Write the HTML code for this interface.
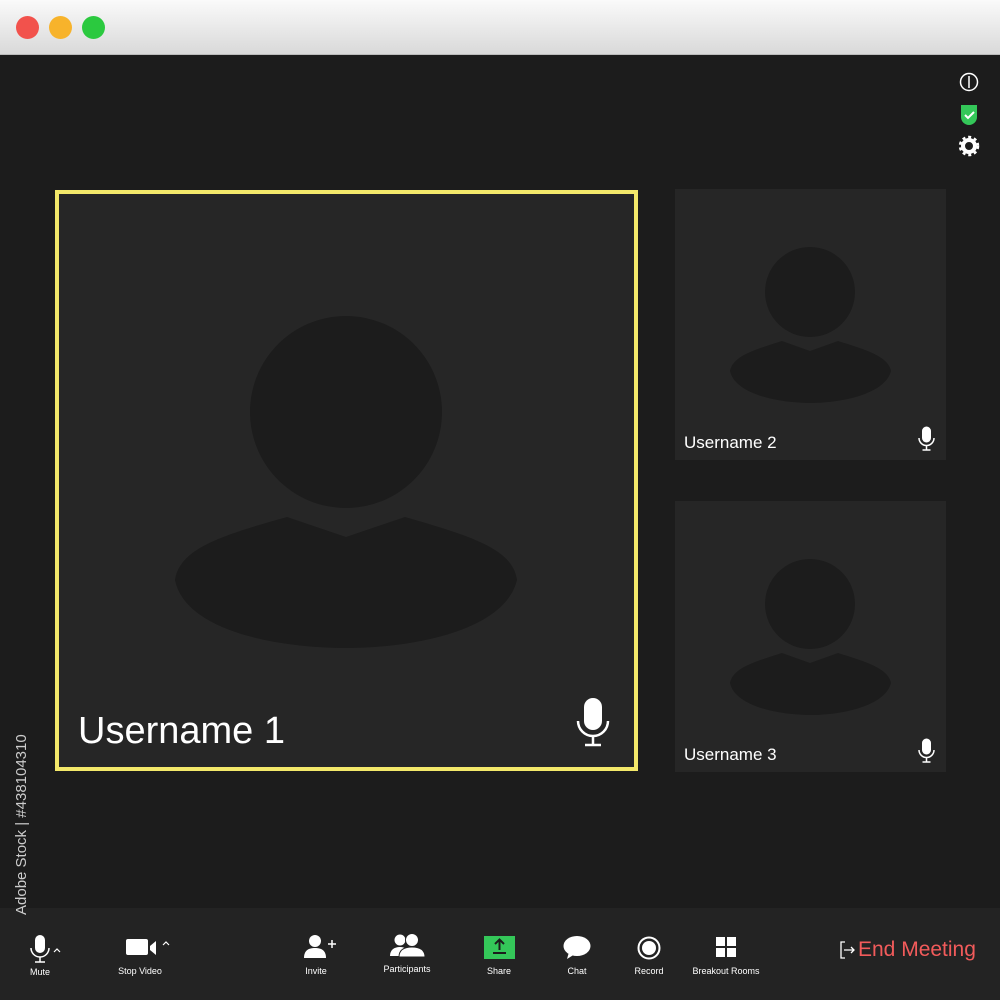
<!DOCTYPE html>
<html><head><style>
*{margin:0;padding:0;box-sizing:border-box}
body{width:1000px;height:1000px;background:#1c1c1c;position:relative;overflow:hidden;font-family:"Liberation Sans",sans-serif;color:#fff}
.title{position:absolute;left:0;top:0;width:1000px;height:55px;background:linear-gradient(#fafafa,#d9d9d9);border-bottom:1px solid #bbb}
.dot{position:absolute;top:16px;width:23px;height:23px;border-radius:50%}
.tile{position:absolute;background:#262626}
.lbl{position:absolute;color:#fff}
.tb{position:absolute;left:0;top:908px;width:1000px;height:92px;background:#232323}
.t{position:absolute;font-size:9px;color:#fff;text-align:center;width:90px}
</style></head><body>
<div class="title">
<div class="dot" style="left:16px;background:#f2524c"></div>
<div class="dot" style="left:49px;background:#f7b32b"></div>
<div class="dot" style="left:82px;background:#2bc93f"></div>
</div>
<svg style="position:absolute;left:958px;top:72px" width="22" height="90" viewBox="0 0 22 90">
<circle cx="11" cy="10" r="8.5" fill="none" stroke="#fff" stroke-width="1.5"/><line x1="11" y1="4" x2="11" y2="16" stroke="#fff" stroke-width="1.5"/>
<path d="M3 33h16v12a8 8 0 0 1-16 0z" fill="#34c759"/><path d="M7 43l3 3 6-6" stroke="#fff" stroke-width="2" fill="none"/>
<circle cx="11" cy="74" r="6" fill="none" stroke="#fff" stroke-width="4"/>
<circle cx="11" cy="74" r="9" fill="none" stroke="#fff" stroke-width="2.5" stroke-dasharray="3 2.9"/>
</svg>
<div class="tile" style="left:55px;top:190px;width:583px;height:581px;border:4px solid #f3e86a"></div>
<svg style="position:absolute;left:175px;top:315px" width="342" height="335" viewBox="0 0 342 335">
<circle cx="171" cy="97" r="96" fill="#1c1c1c"/>
<path d="M0 265 C5 235 40 222 112 202 L171 222 L230 202 C300 222 338 235 342 265 C330 315 240 333 171 333 C100 333 10 315 0 265z" fill="#1c1c1c"/>
</svg>
<div class="lbl" style="left:78px;top:710px;font-size:38px">Username 1</div>
<svg style="position:absolute;left:576px;top:697px" width="34" height="50" viewBox="0 0 34 50">
<rect x="8" y="1" width="18" height="32" rx="9" fill="#fff"/><path d="M2 24a15 15 0 0 0 30 0" stroke="#fff" stroke-width="2.5" fill="none"/><line x1="17" y1="39" x2="17" y2="48" stroke="#fff" stroke-width="2.5"/><line x1="9" y1="48" x2="25" y2="48" stroke="#fff" stroke-width="2.5"/>
</svg>
<div class="tile" style="left:675px;top:189px;width:271px;height:271px"></div>
<svg style="position:absolute;left:730px;top:246px" width="161" height="158" viewBox="0 0 161 158">
<circle cx="80" cy="46" r="45" fill="#1c1c1c"/><path d="M0 125C3 111 20 105 52 95L80 105L108 95C140 105 158 111 161 125C155 148 112 157 80 157C48 157 5 148 0 125z" fill="#1c1c1c"/>
</svg>
<div class="lbl" style="left:684px;top:433px;font-size:17px">Username 2</div>
<svg style="position:absolute;left:918px;top:426px" width="17" height="25" viewBox="0 0 34 50"><rect x="8" y="1" width="18" height="32" rx="9" fill="#fff"/><path d="M2 24a15 15 0 0 0 30 0" stroke="#fff" stroke-width="3" fill="none"/><line x1="17" y1="39" x2="17" y2="48" stroke="#fff" stroke-width="3"/><line x1="9" y1="48" x2="25" y2="48" stroke="#fff" stroke-width="3"/></svg>
<div class="tile" style="left:675px;top:501px;width:271px;height:271px"></div>
<svg style="position:absolute;left:730px;top:558px" width="161" height="158" viewBox="0 0 161 158">
<circle cx="80" cy="46" r="45" fill="#1c1c1c"/><path d="M0 125C3 111 20 105 52 95L80 105L108 95C140 105 158 111 161 125C155 148 112 157 80 157C48 157 5 148 0 125z" fill="#1c1c1c"/>
</svg>
<div class="lbl" style="left:684px;top:745px;font-size:17px">Username 3</div>
<svg style="position:absolute;left:918px;top:738px" width="17" height="25" viewBox="0 0 34 50"><rect x="8" y="1" width="18" height="32" rx="9" fill="#fff"/><path d="M2 24a15 15 0 0 0 30 0" stroke="#fff" stroke-width="3" fill="none"/><line x1="17" y1="39" x2="17" y2="48" stroke="#fff" stroke-width="3"/><line x1="9" y1="48" x2="25" y2="48" stroke="#fff" stroke-width="3"/></svg>
<div class="tb"></div>
<div style="position:absolute;left:12px;top:765px;height:150px;color:#ccc;font-size:15px;line-height:20px;white-space:nowrap;writing-mode:vertical-rl;transform:rotate(180deg)">Adobe Stock | #438104310</div>
<svg style="position:absolute;left:30px;top:935px" width="32" height="28" viewBox="0 0 32 28">
<rect x="5" y="0" width="10" height="18" rx="5" fill="#fff"/><path d="M1 13a9 9 0 0 0 18 0" stroke="#fff" stroke-width="1.5" fill="none"/><line x1="10" y1="22" x2="10" y2="27" stroke="#fff" stroke-width="1.5"/><line x1="5" y1="27" x2="15" y2="27" stroke="#fff" stroke-width="1.5"/>
<path d="M24 17l3-3 3 3" stroke="#fff" stroke-width="1.2" fill="none"/></svg>
<div class="t" style="left:-5px;top:967px">Mute</div>
<svg style="position:absolute;left:125px;top:937px" width="50" height="20" viewBox="0 0 50 20">
<rect x="1" y="2" width="22" height="16" rx="2" fill="#fff"/><path d="M25 9l6-5v14l-6-5z" fill="#fff"/><path d="M38 8l3-3 3 3" stroke="#fff" stroke-width="1.2" fill="none"/></svg>
<div class="t" style="left:95px;top:966px">Stop Video</div>
<svg style="position:absolute;left:303px;top:934px" width="34" height="26" viewBox="0 0 34 26">
<circle cx="12" cy="7" r="6" fill="#fff"/><path d="M1 24c0-8 5-10 11-10s11 2 11 10z" fill="#fff"/><path d="M25 10h8M29 6v8" stroke="#fff" stroke-width="1.5"/></svg>
<div class="t" style="left:271px;top:966px">Invite</div>
<svg style="position:absolute;left:389px;top:934px" width="36" height="24" viewBox="0 0 36 24">
<circle cx="11" cy="6" r="5.5" fill="#fff"/><circle cx="23" cy="6" r="6.5" fill="#fff" stroke="#232323" stroke-width="1"/><path d="M1 22c0-6 4-9 10-9s8 3 8 9z" fill="#fff"/><path d="M10 23c0-7 5-10 13-10s13 3 13 10z" fill="#fff" stroke="#232323" stroke-width="1"/></svg>
<div class="t" style="left:362px;top:964px">Participants</div>
<svg style="position:absolute;left:484px;top:936px" width="31" height="23" viewBox="0 0 31 23">
<rect width="31" height="23" fill="#34c759"/><path d="M15.5 4v10M11 8l4.5-4.5L20 8M9 17h13" stroke="#1c1c1c" stroke-width="2" fill="none"/></svg>
<div class="t" style="left:454px;top:966px">Share</div>
<svg style="position:absolute;left:563px;top:935px" width="28" height="25" viewBox="0 0 28 25">
<ellipse cx="14" cy="11" rx="13.5" ry="10" fill="#fff"/><path d="M6 17l-2 7 8-5z" fill="#fff"/></svg>
<div class="t" style="left:532px;top:966px">Chat</div>
<svg style="position:absolute;left:637px;top:936px" width="24" height="24" viewBox="0 0 24 24">
<circle cx="12" cy="12" r="10.5" fill="none" stroke="#fff" stroke-width="2"/><circle cx="12" cy="12" r="7" fill="#fff"/></svg>
<div class="t" style="left:604px;top:966px">Record</div>
<svg style="position:absolute;left:716px;top:937px" width="20" height="20" viewBox="0 0 20 20">
<rect width="9" height="9" fill="#fff"/><rect x="11" width="9" height="9" fill="#fff"/><rect y="11" width="9" height="9" fill="#fff"/><rect x="11" y="11" width="9" height="9" fill="#fff"/></svg>
<div class="t" style="left:681px;top:966px">Breakout Rooms</div>
<svg style="position:absolute;left:839px;top:941px" width="16" height="18" viewBox="0 0 16 18">
<path d="M6 1H2v16h4" stroke="#fff" stroke-width="1.3" fill="none"/><path d="M5 9h10M12 6l3 3-3 3" stroke="#fff" stroke-width="1.3" fill="none"/></svg>
<div style="position:absolute;left:858px;top:938px;font-size:21px;color:#f25b5b">End Meeting</div>
</body></html>
